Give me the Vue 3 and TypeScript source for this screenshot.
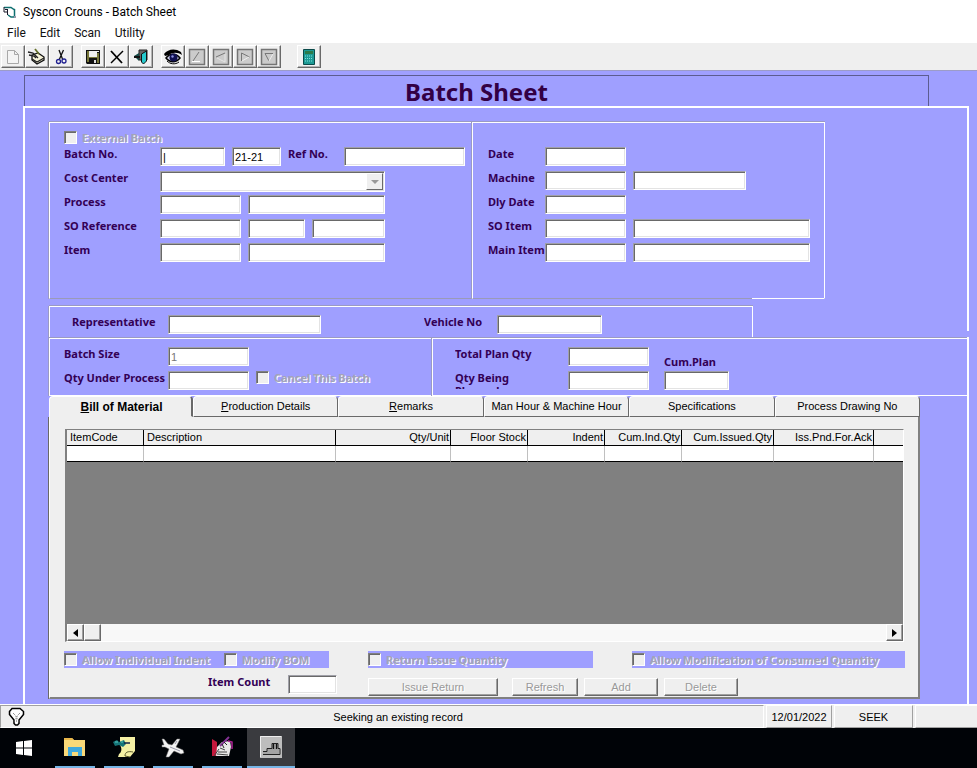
<script setup lang="ts">
import { ref } from 'vue'

interface Column {
  title: string
  width: number | null
  numeric: boolean
}

const menus: string[] = ['File', 'Edit', 'Scan', 'Utility']

const tabs: { key: string; rest: string }[] = [
  { key: 'B', rest: 'ill of Material' },
  { key: 'P', rest: 'roduction Details' },
  { key: 'R', rest: 'emarks' },
  { key: '', rest: 'Man Hour & Machine Hour' },
  { key: '', rest: 'Specifications' },
  { key: '', rest: 'Process Drawing No' },
]
const activeTab = ref(0)

const columns: Column[] = [
  { title: 'ItemCode', width: 77, numeric: false },
  { title: 'Description', width: 192, numeric: false },
  { title: 'Qty/Unit', width: 115, numeric: true },
  { title: 'Floor Stock', width: 77, numeric: true },
  { title: 'Indent', width: 77, numeric: true },
  { title: 'Cum.Ind.Qty', width: 77, numeric: true },
  { title: 'Cum.Issued.Qty', width: 92, numeric: true },
  { title: 'Iss.Pnd.For.Ack', width: 100, numeric: true },
  { title: '', width: null, numeric: true },
]

const batchNo = ref('')
const batchYear = ref('21-21')
const batchSize = ref('1')
</script>

<template>
  <div class="window">
    <header class="caption">
      <svg class="app-icon" width="16" height="16" viewBox="0 0 16 16">
        <path d="M5 5h7v8H9l-3-2H5z" fill="#fff" />
        <path d="M2 3.500h7l3 2h1M12.500 5v8M6 11l3 2h3" fill="none" stroke="#0e6f70" stroke-width="1.500" />
        <path d="M2 3v5h3M5.500 5v6M3 5.500h3" fill="none" stroke="#1a1a2a" />
        <path d="M12 12h2v2h-2z" fill="#99a" />
      </svg>
      <span>Syscon Crouns - Batch Sheet</span>
    </header>

    <nav class="menubar">
      <a v-for="m in menus" :key="m" href="#">{{ m }}</a>
    </nav>

    <div class="toolbar">
      <div class="group">
        <button type="button" aria-label="New">
          <svg width="20" height="20" viewBox="0 0 20 20"><path d="M4.500 3.500h7l4 4v9h-11zM11.500 3.500v4h4" fill="#f4f4f4" stroke="#a8a8a8" /></svg>
        </button>
        <button type="button" aria-label="Open">
          <svg width="20" height="20" viewBox="0 0 20 20">
            <path d="M5 8l6-2 6 4v3l-7 4-5-4z" fill="#f6f3d8" stroke="#111" stroke-width="1.300" />
            <path d="M1 5l5 1 5 5M2 8l5 1 2 2M5 12l5 3 7-4" fill="none" stroke="#222" stroke-width="1.300" />
            <path d="M8 2l4 5" stroke="#66702a" stroke-width="1.800" />
          </svg>
        </button>
        <button type="button" aria-label="Cut">
          <svg width="20" height="20" viewBox="0 0 20 20">
            <path d="M8 3l3.500 9M12.500 3L8.500 12" stroke="#111" stroke-width="1.300" />
            <circle cx="7.500" cy="14.500" r="2" fill="none" stroke="#202090" stroke-width="1.300" />
            <circle cx="13" cy="14" r="2" fill="none" stroke="#202090" stroke-width="1.300" />
          </svg>
        </button>
      </div>
      <div class="group">
        <button type="button" aria-label="Save">
          <svg width="20" height="20" viewBox="0 0 20 20">
            <path d="M3 3h14v14H4l-1-1z" fill="#111" />
            <path d="M4 4h2v11H4zM14 6h2v10h-2zM5 10h10v1H5z" fill="#77773a" />
            <path d="M6 4h8v6H6z" fill="#eee" /><path d="M14 4h2v1h-2z" fill="#eee" />
            <path d="M6 12h8v4H6z" fill="#111" /><path d="M11 13h2v3h-2z" fill="#ddd" />
          </svg>
        </button>
        <button type="button" aria-label="Delete record">
          <svg width="20" height="20" viewBox="0 0 20 20"><path d="M4 4l11 12" stroke="#000" stroke-width="1.800" /><path d="M16 4L4 16" stroke="#000" stroke-width="1.500" /></svg>
        </button>
        <button type="button" aria-label="Exit">
          <svg width="20" height="20" viewBox="0 0 20 20">
            <path d="M8 3h8v10H8z" fill="#666" stroke="#222" /><path d="M8 6v8L3 9z" fill="#164d49" />
            <path d="M10.500 7l5-3v10l-3 3-2-2z" fill="#25c8cc" stroke="#111" /><path d="M3 9h6v2H3z" fill="#111" />
          </svg>
        </button>
      </div>
      <div class="group">
        <button type="button" aria-label="View">
          <svg width="20" height="20" viewBox="0 0 20 20">
            <path d="M1 7c4-5 11-6 17-2l1 3c-4-3-10-3-13 0l-4 1z" fill="#000" />
            <path d="M3 11c4-5 10-5 14 0-4 5-10 5-14 0z" fill="#cfd0e6" stroke="#000" stroke-width="1.500" />
            <circle cx="10.500" cy="10.500" r="4" fill="#111150" /><circle cx="9.500" cy="9.500" r="1.200" fill="#8b90e0" />
            <path d="M4 14c3 3 8 4 12 1" fill="none" stroke="#000" />
          </svg>
        </button>
        <button type="button" aria-label="First">
          <svg width="20" height="20" viewBox="0 0 20 20"><path d="M2.500 2.500h15v15h-15z" fill="#cbcbcb" stroke="#747474" stroke-width="1.500" /><path d="M6 14l6-9" stroke="#777" /><path d="M5 14.500h8" stroke="#fff" /></svg>
        </button>
        <button type="button" aria-label="Previous">
          <svg width="20" height="20" viewBox="0 0 20 20"><path d="M2.500 2.500h15v15h-15z" fill="#cbcbcb" stroke="#747474" stroke-width="1.500" /><path d="M5 10l9-4" stroke="#777" /><path d="M6 11l8 4V7" stroke="#e5e5e5" fill="none" /></svg>
        </button>
        <button type="button" aria-label="Next">
          <svg width="20" height="20" viewBox="0 0 20 20"><path d="M2.500 2.500h15v15h-15z" fill="#cbcbcb" stroke="#747474" stroke-width="1.500" /><path d="M6.500 14V6l8 4" stroke="#777" fill="none" /><path d="M7 14l7-4" stroke="#eee" /></svg>
        </button>
        <button type="button" aria-label="Last">
          <svg width="20" height="20" viewBox="0 0 20 20"><path d="M2.500 2.500h15v15h-15z" fill="#cbcbcb" stroke="#747474" stroke-width="1.500" /><path d="M10 14L6 6.500h8" stroke="#777" fill="none" /><path d="M10 14l4-7" stroke="#eee" /></svg>
        </button>
      </div>
      <div class="group">
        <button type="button" aria-label="Calculator">
          <svg width="20" height="20" viewBox="0 0 20 20">
            <path d="M4.500 2.500h11v15h-11z" fill="#1d9a94" stroke="#0b4a4a" /><path d="M6 4h8v3H6z" fill="#2d7a4a" />
            <path d="M6 9h8M6 11.500h8M6 14h8" stroke="#7fe0de" stroke-dasharray="1 1" />
          </svg>
        </button>
      </div>
    </div>

    <main class="workspace">
      <div class="heading"><h1>Batch Sheet</h1></div>

      <div class="frame">
        <div class="panels">
          <section class="panel batch">
            <div class="check">
              <input id="external" type="checkbox" disabled />
              <label for="external">External Batch</label>
            </div>
            <div class="row">
              <label class="w96" for="batchNo">Batch No.</label>
              <span class="fields">
                <input id="batchNo" v-model="batchNo" class="w65" placeholder="|" />
                <input v-model="batchYear" class="w49" aria-label="Batch year" />
                <label class="w49" for="refNo">Ref No.</label>
                <input id="refNo" class="w121" />
              </span>
            </div>
            <div class="row">
              <label class="w96" for="costCenter">Cost Center</label>
              <span class="combo">
                <select id="costCenter" disabled><option></option></select>
                <span class="drop"><svg width="8" height="4" viewBox="0 0 8 4"><path d="M0 0h8L4 4z" fill="#999" /></svg></span>
              </span>
            </div>
            <div class="row">
              <label class="w96" for="process">Process</label>
              <span class="fields">
                <input id="process" class="w81" />
                <input class="w137" aria-label="Process name" />
              </span>
            </div>
            <div class="row">
              <label class="w96" for="soRef">SO Reference</label>
              <span class="fields">
                <input id="soRef" class="w81" />
                <input class="w57" aria-label="SO year" />
                <input class="w73" aria-label="SO line" />
              </span>
            </div>
            <div class="row">
              <label class="w96" for="item">Item</label>
              <span class="fields">
                <input id="item" class="w81" />
                <input class="w137" aria-label="Item name" />
              </span>
            </div>
          </section>

          <section class="panel schedule">
            <div class="row">
              <label class="w57" for="date">Date</label>
              <input id="date" class="w81" />
            </div>
            <div class="row">
              <label class="w57" for="machine">Machine</label>
              <span class="fields">
                <input id="machine" class="w81" />
                <input class="w113" aria-label="Machine name" />
              </span>
            </div>
            <div class="row">
              <label class="w57" for="dly">Dly Date</label>
              <input id="dly" class="w81" />
            </div>
            <div class="row">
              <label class="w57" for="soItem">SO Item</label>
              <span class="fields">
                <input id="soItem" class="w81" />
                <input class="w177" aria-label="SO item name" />
              </span>
            </div>
            <div class="row">
              <label class="w57" for="mainItem">Main Item</label>
              <span class="fields">
                <input id="mainItem" class="w81" />
                <input class="w177" aria-label="Main item name" />
              </span>
            </div>
          </section>
        </div>

        <section class="panel transport">
          <div class="row">
            <label class="w96" for="rep">Representative</label>
            <input id="rep" class="w153" />
          </div>
          <div class="row">
            <label class="w73" for="vehicle">Vehicle No</label>
            <input id="vehicle" class="w105" />
          </div>
        </section>

        <div class="quantities">
          <section class="panel size">
            <div class="row">
              <label class="w104" for="batchSize">Batch Size</label>
              <input id="batchSize" v-model="batchSize" class="w81 dim" />
            </div>
            <div class="row">
              <label class="w104" for="underProcess">Qty Under Process</label>
              <span class="fields">
                <input id="underProcess" class="w81" />
                <span class="check">
                  <input id="cancel" type="checkbox" disabled />
                  <label for="cancel">Cancel This Batch</label>
                </span>
              </span>
            </div>
          </section>
          <section class="panel plan">
            <div class="plan-qty">
              <div class="row">
                <label class="w113" for="totalPlan">Total Plan Qty</label>
                <input id="totalPlan" class="w81" />
              </div>
              <div class="row">
                <label class="w113 clipped" for="beingPlanned">Qty Being<br />Planned</label>
                <input id="beingPlanned" class="w81" />
              </div>
            </div>
            <div class="cum">
              <label for="cumPlan">Cum.Plan</label>
              <input id="cumPlan" class="w65" />
            </div>
          </section>
        </div>

        <div class="tabbed">
          <div class="tabs" role="tablist">
            <button
              v-for="(t, i) in tabs"
              :key="t.rest"
              type="button"
              role="tab"
              class="tab"
              :class="{ active: i === activeTab }"
              :aria-selected="i === activeTab"
              @click="activeTab = i"
            >
              <span><u v-if="t.key">{{ t.key }}</u>{{ t.rest }}</span>
            </button>
          </div>

          <div class="sheet">
            <div class="grid">
              <table>
                <colgroup>
                  <col v-for="(c, i) in columns" :key="i" :style="c.width ? { width: c.width + 'px' } : {}" />
                </colgroup>
                <thead>
                  <tr>
                    <th v-for="(c, i) in columns" :key="i" :class="{ num: c.numeric }">{{ c.title }}</th>
                  </tr>
                </thead>
                <tbody>
                  <tr>
                    <td v-for="(c, i) in columns" :key="i"></td>
                  </tr>
                </tbody>
              </table>
              <div class="scroll">
                <button type="button" aria-label="Scroll left">
                  <svg width="5" height="8" viewBox="0 0 5 8"><path d="M5 0v8L0 4z" /></svg>
                </button>
                <span class="thumb"></span>
                <span class="track"></span>
                <button type="button" aria-label="Scroll right">
                  <svg width="5" height="8" viewBox="0 0 5 8"><path d="M0 0v8l5-4z" /></svg>
                </button>
              </div>
            </div>

            <div class="strips">
              <div class="strip">
                <span class="check first">
                  <input id="indent" type="checkbox" disabled />
                  <label for="indent">Allow Individual Indent</label>
                </span>
                <span class="check">
                  <input id="bom" type="checkbox" disabled />
                  <label for="bom">Modify BOM</label>
                </span>
              </div>
              <div class="strip">
                <span class="check">
                  <input id="return" type="checkbox" disabled />
                  <label for="return">Return Issue Quantity</label>
                </span>
              </div>
              <div class="strip">
                <span class="check">
                  <input id="consumed" type="checkbox" disabled />
                  <label for="consumed">Allow Modification of Consumed Quantity</label>
                </span>
              </div>
            </div>

            <div class="footer">
              <div class="row">
                <label class="w81" for="count">Item Count</label>
                <input id="count" class="w49" />
              </div>
              <div class="actions">
                <button class="wide" type="button" disabled>Issue Return</button>
                <button class="narrow" type="button" disabled>Refresh</button>
                <button type="button" disabled>Add</button>
                <button type="button" disabled>Delete</button>
              </div>
            </div>
          </div>
        </div>
      </div>
    </main>

    <footer class="status">
      <div class="cell message">
        <svg width="32" height="20" viewBox="0 0 32 20">
          <path d="M11 1.500h8l3.500 3v3L18 13v3.500L16.500 18h-2L13 16.500V13L8.500 7.500v-3z" fill="#fff" stroke="#000" stroke-width="1.500" />
          <path d="M12 6l3 3v4M19 6l-3 3v4M13 14h5" stroke="#666" fill="none" stroke-dasharray="1 1" />
        </svg>
        <span>Seeking an existing record</span>
      </div>
      <div class="cell date">12/01/2022</div>
      <div class="cell mode">SEEK</div>
      <div class="cell rest"></div>
    </footer>

    <div class="taskbar">
      <button class="start" type="button" aria-label="Start">
        <svg width="16" height="16" viewBox="0 0 16 16"><path d="M0 2l7-1v6.500H0zM8 1l8-1v7.500H8zM0 8.500h7V15l-7-1zM8 8.500h8V16l-8-1z" fill="#fff" /></svg>
      </button>
      <button type="button" aria-label="File Explorer">
        <svg width="24" height="22" viewBox="0 0 24 22">
          <path d="M1 2h8l2 2h11v16H1z" fill="#f9d978" /><path d="M1 2h8l2 2H1z" fill="#e8b64a" />
          <path d="M5 11h14v9h-4v-4H9v4H5z" fill="#3fa9dd" />
        </svg>
      </button>
      <button type="button" aria-label="Notes">
        <svg width="24" height="22" viewBox="0 0 24 22">
          <path d="M8 1h15v14l-5 6H6l1-3c3-2 3-6 1-9z" fill="#f4f0a4" />
          <path d="M13 20c0-4 3-5 8-4M13 20l5 1" stroke="#55552a" fill="none" />
          <path d="M1 6l4-2 2 2 5-2 2 4-3 3-4-2-4 1z" fill="#167578" /><path d="M12 7h6" stroke="#124" stroke-width="1.500" />
          <path d="M3 6h3M9 6h2" stroke="#55c7c0" />
        </svg>
      </button>
      <button type="button" aria-label="Airplane">
        <svg width="24" height="22" viewBox="0 0 24 22">
          <path d="M1 3l2 0 4 5 4 1 5-6 3 0-4 8 7 3 1 3-3 1-7-3-5 6H5l3-8-4-2-3 0 0-2 2 0z" fill="#f3f3f3" stroke="#777" stroke-width="0.500" />
          <path d="M9 11l10 4M14 8l2-3" stroke="#99a" />
        </svg>
      </button>
      <button type="button" aria-label="Designer">
        <svg width="24" height="22" viewBox="0 0 24 22">
          <path d="M2 3l5 3v14H2z" fill="#c4183c" /><path d="M7 11l5-5 8-1 1 6-2 9H6z" fill="#e8e8e8" />
          <path d="M4 20l5-7M8 16h9M10 12l5 2M7 18l11 1" stroke="#444" fill="none" />
          <path d="M10 10l9-9" stroke="#843394" stroke-width="2" /><path d="M18 5l4 1v7" stroke="#b12599" fill="none" stroke-width="1.500" />
          <path d="M14 6l3 3M12 8l2 4" stroke="#222" />
        </svg>
      </button>
      <button class="current" type="button" aria-label="Syscon Crouns">
        <svg width="24" height="24" viewBox="0 0 24 24">
          <path d="M1 1h22v22H1z" fill="#bdbdbd" /><path d="M1.500 22V1.500H22" stroke="#eee" fill="none" />
          <path d="M4 20v-3h4v-3h12v6z" fill="#a4a4a4" /><path d="M4 16.500h4v-3h5V8.500h6v5h2v6H4" stroke="#222" fill="none" />
          <path d="M14.500 9v5M17.500 9v5" stroke="#111" stroke-width="1.500" />
        </svg>
      </button>
    </div>
  </div>
</template>

<style>
body {
  margin: 0;
}
</style>

<style scoped>
.window {
  display: flex;
  flex-direction: column;
  min-height: 100vh;
  background: #efefef;
  color: #000;
  font: 11px/14px "Liberation Sans", Arial, sans-serif;
}
.window *,
.window *::before,
.window *::after {
  box-sizing: border-box;
}
button,
input,
select {
  font: inherit;
  color: inherit;
  margin: 0;
  padding: 0;
  border-radius: 0;
}
svg {
  display: block;
}

/* Caption and menu */
.caption {
  display: flex;
  align-items: center;
  gap: 5px;
  height: 24px;
  padding-left: 2px;
  background: #fff;
  font: 12px/16px Roboto, "Open Sans", sans-serif;
}
.menubar {
  display: flex;
  gap: 14px;
  height: 19px;
  padding-left: 7px;
  background: #fff;
  font: 12px/18px Roboto, "Open Sans", sans-serif;
}
.menubar a {
  color: #111;
  text-decoration: none;
}

/* Toolbar */
.toolbar {
  display: flex;
  gap: 8px;
  padding: 2px 0 2px 1px;
  height: 27px;
}
.group {
  display: flex;
}
.group:last-child {
  margin-left: 8px;
}
.group button {
  display: flex;
  align-items: center;
  justify-content: center;
  width: 24px;
  height: 23px;
  background: #f1f1f1;
  border: 1px solid #fff;
  border-right-color: #696969;
  border-bottom-color: #696969;
  box-shadow: inset -1px -1px #b4b4b4;
}

/* Workspace */
.workspace {
  display: flex;
  flex-direction: column;
  flex: 1;
  padding: 4px 8px 0 23px;
  background: #9f9fff;
  border-top: 1px solid #9c9cc8;
}
.heading {
  height: 31px;
  margin: 0 40px 0 1px;
  border: 1px solid #5c5c90;
  border-bottom: 0;
}
h1 {
  margin: 0;
  text-align: center;
  font: bold 24px/31px "Noto Sans", sans-serif;
  color: #330044;
}
.frame {
  display: flex;
  flex-direction: column;
  flex: 1;
  padding: 14px 0 5px 24px;
  border: 2px solid #fff;
  border-bottom: 0;
}
.panel {
  border: 1px solid #fff;
  box-shadow: 0 -1px #9a9ac4, -1px 0 #9a9ac4;
}
.panels {
  display: flex;
  height: 177px;
}
.batch {
  width: 423px;
  padding: 8px 0 0 14px;
  border-right: 0;
  border-bottom-color: #9a9ab8;
}
.schedule {
  position: relative;
  width: 353px;
  padding: 24px 0 0 15px;
  border-bottom-color: #9a9ab8;
}
.schedule::after {
  content: "";
  position: absolute;
  right: 0;
  bottom: -1px;
  width: 72px;
  height: 1px;
  background: #fff;
}
.transport {
  display: flex;
  gap: 103px;
  width: 704px;
  height: 33px;
  margin-top: 7px;
  padding: 8px 0 0 22px;
}
.quantities {
  position: relative;
  display: flex;
  height: 58px;
  margin-top: -1px;
}
.quantities::before {
  content: "";
  position: absolute;
  top: -7px;
  right: -2px;
  width: 2px;
  height: 6px;
  background: #9f9fff;
}
.size {
  width: 383px;
  padding: 8px 0 0 14px;
  border-right: 0;
}
.plan {
  display: flex;
  gap: 15px;
  flex: 1;
  padding: 8px 0 0 22px;
  border-right: 0;
}

/* Form rows */
label {
  font: bold 11px/14px "Noto Sans", sans-serif;
  color: #330055;
  white-space: nowrap;
}
.row {
  display: flex;
  align-items: flex-start;
  height: 24px;
}
.row > label {
  flex: none;
  overflow: hidden;
}
.fields {
  display: flex;
  gap: 7px;
}
.row input:not([type="checkbox"]),
.cum input {
  height: 19px;
  padding: 0 2px;
  background: #fff;
  border: 1px solid #fff;
  border-top-color: #a0a0a8;
  border-left-color: #a0a0a8;
  box-shadow: inset 1px 1px #696969, inset -1px -1px #e3e3e3;
  outline: 0;
}
input::placeholder {
  color: #000;
  opacity: 1;
}
.row .dim {
  color: #777;
}
.combo {
  position: relative;
  width: 225px;
}
select {
  display: block;
  width: 100%;
  height: 21px;
  appearance: none;
  opacity: 1;
  background: #fff;
  border: 1px solid #fff;
  border-top-color: #a0a0a8;
  border-left-color: #a0a0a8;
  box-shadow: inset 1px 1px #696969, inset -1px -1px #e3e3e3;
}
.drop {
  position: absolute;
  top: 2px;
  right: 2px;
  bottom: 2px;
  display: flex;
  align-items: center;
  justify-content: center;
  width: 17px;
  background: #efefef;
  border: 1px solid #fff;
  border-right-color: #696969;
  border-bottom-color: #696969;
  pointer-events: none;
}
.check {
  display: flex;
  align-items: flex-start;
  gap: 5px;
  height: 16px;
}
.check input {
  appearance: none;
  width: 13px;
  height: 13px;
  background: #efefef;
  border: 1px solid #fff;
  border-top-color: #808080;
  border-left-color: #808080;
  box-shadow: inset 1px 1px #696969;
}
.check label {
  color: #a3a3b8;
  text-shadow: 1px 1px #fff;
}
.row .clipped {
  height: 18px;
  line-height: 13px;
}
.cum {
  display: flex;
  flex-direction: column;
  gap: 2px;
  padding-top: 8px;
}
.w49 { width: 49px; }
.w57 { width: 57px; }
.w65 { width: 65px; }
.w73 { width: 73px; }
.w81 { width: 81px; }
.w96 { width: 96px; }
.w104 { width: 104px; }
.w105 { width: 105px; }
.w113 { width: 113px; }
.w121 { width: 121px; }
.w137 { width: 137px; }
.w153 { width: 153px; }
.w177 { width: 177px; }

/* Tabs */
.tabbed {
  display: flex;
  flex-direction: column;
  flex: 1;
  margin-right: 47px;
}
.tabs {
  display: flex;
  height: 21px;
}
.tab {
  flex: 1;
  padding-bottom: 2px;
  background: #efefef;
  border: 1px solid #696969;
  border-top-color: #fff;
  border-left-color: #fff;
  border-radius: 4px 4px 0 0;
  white-space: nowrap;
}
.tab.active {
  flex: none;
  width: 144px;
  padding: 0 0 0 2px;
  border-bottom-color: #efefef;
  border-right-width: 2px;
  font-size: 12px;
  font-weight: bold;
}
.sheet {
  display: flex;
  flex-direction: column;
  flex: 1;
  padding: 12px 13px 1px 14px;
  background: #efefef;
  border: 2px solid #808080;
  border-top: 0;
  border-left: 1px solid #fff;
  box-shadow: -1px 0 #696969;
}
.grid {
  display: flex;
  flex-direction: column;
  flex: 1;
  margin: 0 1px;
  background: #808080;
  border: 1px solid #fff;
  border-top-color: #808080;
  border-left: 2px solid #808080;
}
table {
  width: 100%;
  table-layout: fixed;
  border-collapse: separate;
  border-spacing: 0;
}
th,
td {
  height: 16px;
  padding: 0 1px 0 3px;
  border-right: 1px solid #000;
  border-bottom: 1px solid #000;
  line-height: 15px;
  font-weight: normal;
  text-align: left;
  white-space: nowrap;
  background: #efefef;
}
td {
  background: #fff;
  border-right-color: #c0c0c0;
}
th:last-child,
td:last-child {
  border-right: 0;
}
.num {
  text-align: right;
}
.scroll {
  display: flex;
  height: 17px;
  margin-top: auto;
  background: #f8f8f8;
}
.scroll button,
.thumb,
.actions button {
  display: flex;
  align-items: center;
  justify-content: center;
  width: 17px;
  background: #efefef;
  border: 1px solid #fff;
  border-right-color: #696969;
  border-bottom-color: #696969;
  box-shadow: inset -1px -1px #a0a0a0;
}
.track {
  flex: 1;
}
.strips {
  display: grid;
  grid-template-columns: 265fr 225fr 273fr;
  gap: 39px;
  margin-top: 9px;
}
.strip {
  display: flex;
  height: 17px;
  padding-top: 2px;
  background: #9f9fff;
}
.first {
  width: 160px;
}
.footer {
  display: flex;
  align-items: flex-end;
  gap: 31px;
  height: 28px;
  padding-left: 144px;
}
.footer .row {
  height: 21px;
}
.footer .row label {
  width: 80px;
}
.actions {
  display: flex;
  gap: 6px;
}
.actions button {
  width: 74px;
  height: 18px;
  color: #999;
  text-shadow: 1px 1px #fff;
}
.actions .wide {
  width: 130px;
  margin-right: 8px;
}
.actions .narrow {
  width: 66px;
}

/* Status bar */
.status {
  display: flex;
  gap: 2px;
  height: 24px;
  border-top: 1px solid #fff;
}
.cell {
  display: flex;
  align-items: center;
  justify-content: center;
  border: 1px solid #a0a0a0;
  border-right-color: #fff;
  border-bottom-color: #fff;
}
.message {
  flex: 1;
}
.message span {
  flex: 1;
  text-align: center;
}
.date,
.mode,
.rest {
  width: 66px;
  border-color: #fff;
  border-right-color: #a0a0a0;
  border-bottom-color: #a0a0a0;
}
.mode {
  width: 79px;
}
.rest {
  width: 62px;
  border-right: 0;
}

/* Taskbar */
.taskbar {
  display: flex;
  gap: 9px;
  height: 40px;
  background: #000307;
}
.taskbar button {
  display: flex;
  align-items: center;
  justify-content: center;
  width: 40px;
  background: none;
  border: 0;
  border-bottom: 2px solid #76b5e6;
}
.taskbar .start {
  width: 48px;
  margin-right: -2px;
  border-bottom: 0;
}
.taskbar .current {
  width: 48px;
  margin-left: -4px;
  background: #3a3b3f;
}
</style>
